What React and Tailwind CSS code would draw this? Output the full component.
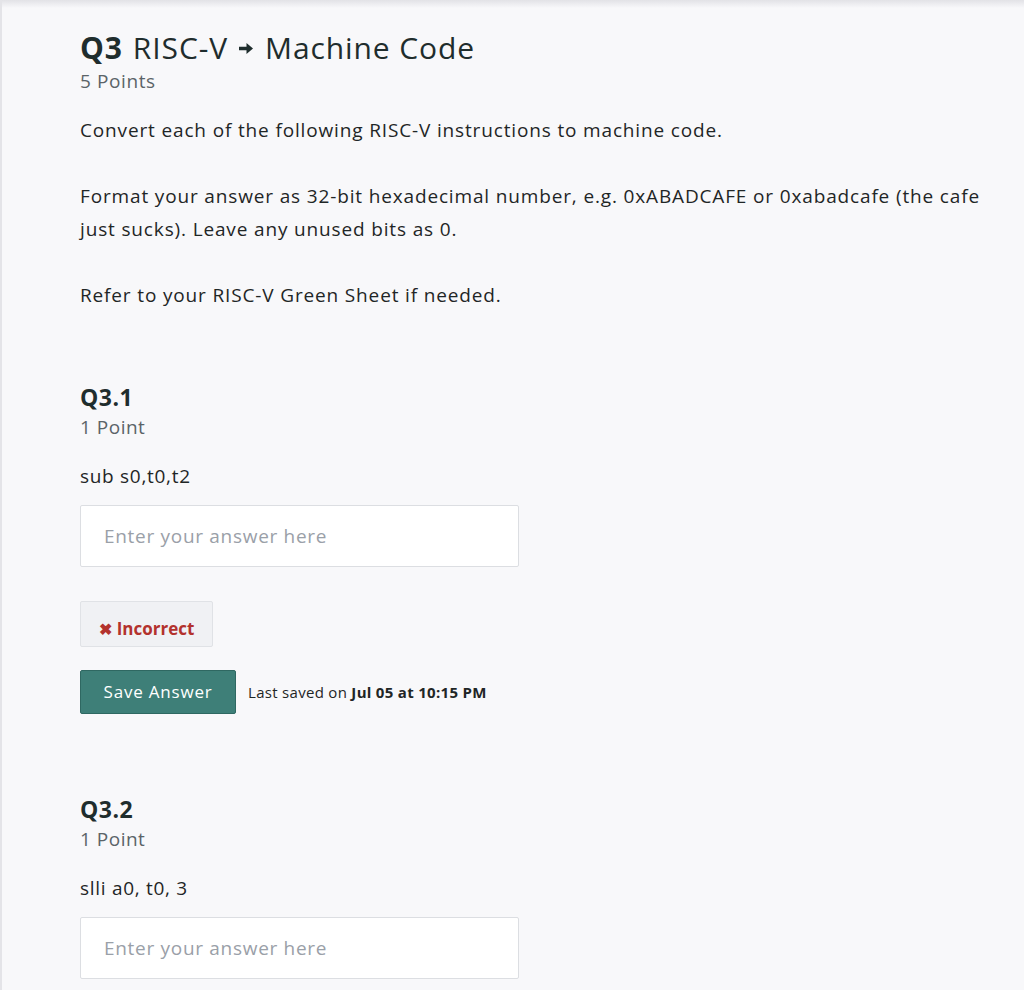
import React from "react";

function Question({ id, points, prompt, children }) {
  return (
    <div>
      <div className="text-[23px] leading-[28px] font-bold tracking-[0.5px] text-[#1f2d2d]">{id}</div>
      <div className="mt-[3px] text-[19px] leading-[26px] tracking-[0.5px] text-[#5b6468]">{points}</div>
      <div className="mt-[23px] text-[19px] leading-[26px] tracking-[0.7px] text-[#1f2626]">{prompt}</div>
      <div className="mt-[16px] w-[439px] h-[62px] bg-white border border-[#dcdee2] rounded-[2px] flex items-center px-[23px]">
        <span className="text-[19px] tracking-[0.7px] text-[#9aa0a8]">Enter your answer here</span>
      </div>
      {children}
    </div>
  );
}

export default function App() {
  return (
    <div
      className="min-h-[990px] bg-[#f8f8fa] text-[#1f2626] border-l-2 border-[#e4e4e8] relative"
      style={{ fontFamily: "'Open Sans', 'Noto Sans', Arial, sans-serif" }}
    >
      <div className="absolute top-0 left-0 right-0 h-[8px] bg-gradient-to-b from-[#e2e2e6] to-transparent pointer-events-none" />
      <div className="pl-[78px] pr-[24px] pt-[28px]">
        <h1 className="text-[30px] leading-[40px] tracking-[0.9px] text-[#1f2d2d] flex items-center">
          <span className="font-bold mr-[10px]">Q3</span>
          <span>RISC-V</span>
          <span className="mx-[11px] inline-flex">
            <svg width="15" height="13" viewBox="0 0 15 13"><path d="M0 4.8h7.5V1l6.5 5.5-6.5 5.5V8.2H0z" fill="#1f2d2d" /></svg>
          </span>
          <span>Machine Code</span>
        </h1>
        <div className="text-[19px] leading-[26px] tracking-[0.6px] text-[#5b6468]">5 Points</div>

        <div className="mt-[20px] text-[19px] leading-[33px] tracking-[0.85px]">
          <p>Convert each of the following RISC-V instructions to machine code.</p>
          <p className="mt-[33px]">
            Format your answer as 32-bit hexadecimal number, e.g. 0xABADCAFE or 0xabadcafe (the cafe just sucks). Leave any unused bits as 0.
          </p>
          <p className="mt-[33px]">Refer to your RISC-V Green Sheet if needed.</p>
        </div>

        <div className="mt-[71px]">
          <Question id="Q3.1" points="1 Point" prompt="sub s0,t0,t2">
            <div className="mt-[34px] w-[133px] h-[46px] pt-[10px] bg-[#f0f1f4] border border-[#e0e2e6] rounded-[2px] flex items-center justify-center text-[17px] font-bold text-[#b3322d]">
              <span className="mr-[5px] text-[16px]">✖</span>Incorrect
            </div>
            <div className="mt-[23px] flex items-center">
              <button className="w-[156px] h-[44px] bg-[#3e7f78] border border-[#2f6862] rounded-[2px] text-white text-[17px] tracking-[0.8px]">
                Save Answer
              </button>
              <span className="ml-[12px] text-[15px] tracking-[0.3px] text-[#1f2626]">
                Last saved on <span className="font-bold">Jul 05 at 10:15 PM</span>
              </span>
            </div>
          </Question>
        </div>

        <div className="mt-[81px]">
          <Question id="Q3.2" points="1 Point" prompt="slli a0, t0, 3" />
        </div>
      </div>
    </div>
  );
}
